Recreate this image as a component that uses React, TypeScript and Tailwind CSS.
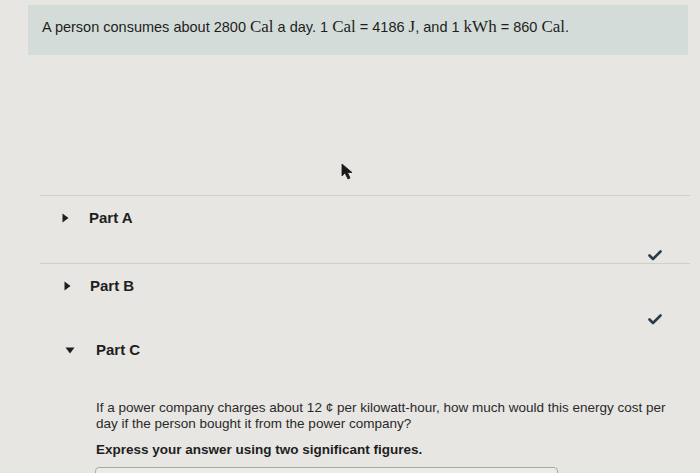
import React from "react";

function Check() {
  return (
    <svg width="14" height="11" viewBox="0 0 14 11" className="block">
      <path d="M1.5 5.5 L5 9 L12.5 1.5" fill="none" stroke="#2f3a48" strokeWidth="2.6" strokeLinecap="round" strokeLinejoin="round" />
    </svg>
  );
}

function RightTri() {
  return (
    <svg width="7" height="10" viewBox="0 0 7 10" className="block">
      <path d="M0.5 0.5 L6.5 5 L0.5 9.5 Z" fill="#1e1e1e" />
    </svg>
  );
}

function DownTri() {
  return (
    <svg width="10" height="7" viewBox="0 0 10 7" className="block">
      <path d="M0.5 0.5 L9.5 0.5 L5 6.5 Z" fill="#1e1e1e" />
    </svg>
  );
}

const serif = "font-['Liberation_Serif',serif] text-[17px]";

export default function App() {
  return (
    <div className="relative w-[700px] h-[473px] overflow-hidden bg-[#e7e6e2] font-['Liberation_Sans',Arial,sans-serif] text-[#222]">
      <div className="ml-[28px] mt-[5px] w-[660px] h-[50px] bg-[#d4dcd9] pl-[14px] pt-[13px] text-[14.5px] leading-[18px] text-[#1e1e1e]">
        A person consumes about 2800 <span className={serif}>Cal</span> a day. 1 <span className={serif}>Cal</span> = 4186 <span className={serif}>J</span>, and 1 <span className={serif}>kWh</span> = 860 <span className={serif}>Cal</span>.
      </div>

      <div className="mt-[140px] ml-[40px] mr-[10px] border-t border-[#cfcfcb]">
        <div className="relative h-[67px]">
          <div className="flex items-center pt-[14px] pl-[22px] gap-[20px]">
            <RightTri />
            <span className="font-bold text-[15px] leading-[16px] text-[#1e1e1e]">Part A</span>
          </div>
          <div className="absolute right-[28px] top-[54px]"><Check /></div>
        </div>
        <div className="relative h-[66px] border-t border-[#cfcfcb]">
          <div className="flex items-center pt-[14px] pl-[24px] gap-[19px]">
            <RightTri />
            <span className="font-bold text-[15px] leading-[16px] text-[#1e1e1e]">Part B</span>
          </div>
          <div className="absolute right-[28px] top-[50px]"><Check /></div>
        </div>
        <div className="flex items-center pt-[13px] pl-[25px] gap-[21px]">
          <DownTri />
          <span className="font-bold text-[15px] leading-[16px] text-[#1e1e1e]">Part C</span>
        </div>
        <div className="ml-[56px] mt-[42px] w-[592px] text-[13.5px] leading-[16px] text-[#2a2a2a]">
          If a power company charges about 12 ¢ per kilowatt-hour, how much would this energy cost per day if the person bought it from the power company?
        </div>
        <div className="ml-[56px] mt-[10px] font-bold text-[13.5px] leading-[16px] text-[#1e1e1e]">
          Express your answer using two significant figures.
        </div>
        <div className="ml-[55px] mt-[9px] w-[463px] h-[30px] border border-[#a9a9a6] rounded-[4px] bg-[#ebebe8]" />
      </div>

      <svg className="absolute left-[341px] top-[163px]" width="14" height="18" viewBox="0 0 14 18">
        <path d="M1 1 L1 13 L4 10 L7 16 L9 15 L6.5 9.5 L11 9.5 Z" fill="#1a1a1a" stroke="#1a1a1a" strokeWidth="0.8" strokeLinejoin="round" />
      </svg>
    </div>
  );
}
